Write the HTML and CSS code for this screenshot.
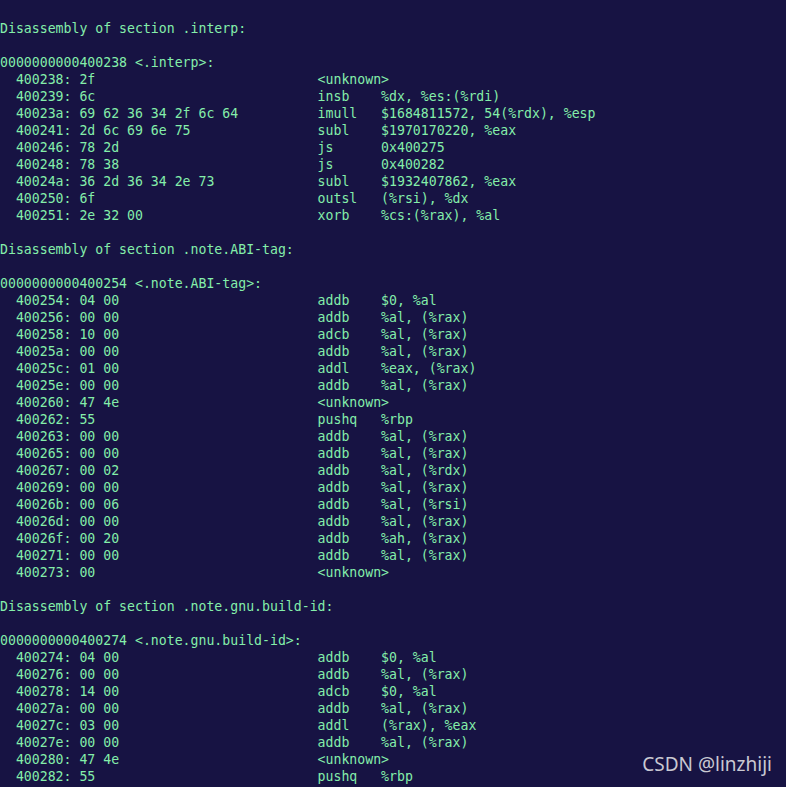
FILE: index.html
```html
<!DOCTYPE html>
<html>
<head>
<meta charset="utf-8">
<link rel="stylesheet" href="styles.css">
</head>
<body>
<pre class="term">

Disassembly of section .interp:

0000000000400238 &lt;.interp&gt;:
  400238: 2f                            &lt;unknown&gt;
  400239: 6c                            insb    %dx, %es:(%rdi)
  40023a: 69 62 36 34 2f 6c 64          imull   $1684811572, 54(%rdx), %esp
  400241: 2d 6c 69 6e 75                subl    $1970170220, %eax
  400246: 78 2d                         js      0x400275
  400248: 78 38                         js      0x400282
  40024a: 36 2d 36 34 2e 73             subl    $1932407862, %eax
  400250: 6f                            outsl   (%rsi), %dx
  400251: 2e 32 00                      xorb    %cs:(%rax), %al

Disassembly of section .note.ABI-tag:

0000000000400254 &lt;.note.ABI-tag&gt;:
  400254: 04 00                         addb    $0, %al
  400256: 00 00                         addb    %al, (%rax)
  400258: 10 00                         adcb    %al, (%rax)
  40025a: 00 00                         addb    %al, (%rax)
  40025c: 01 00                         addl    %eax, (%rax)
  40025e: 00 00                         addb    %al, (%rax)
  400260: 47 4e                         &lt;unknown&gt;
  400262: 55                            pushq   %rbp
  400263: 00 00                         addb    %al, (%rax)
  400265: 00 00                         addb    %al, (%rax)
  400267: 00 02                         addb    %al, (%rdx)
  400269: 00 00                         addb    %al, (%rax)
  40026b: 00 06                         addb    %al, (%rsi)
  40026d: 00 00                         addb    %al, (%rax)
  40026f: 00 20                         addb    %ah, (%rax)
  400271: 00 00                         addb    %al, (%rax)
  400273: 00                            &lt;unknown&gt;

Disassembly of section .note.gnu.build-id:

0000000000400274 &lt;.note.gnu.build-id&gt;:
  400274: 04 00                         addb    $0, %al
  400276: 00 00                         addb    %al, (%rax)
  400278: 14 00                         adcb    $0, %al
  40027a: 00 00                         addb    %al, (%rax)
  40027c: 03 00                         addl    (%rax), %eax
  40027e: 00 00                         addb    %al, (%rax)
  400280: 47 4e                         &lt;unknown&gt;
  400282: 55                            pushq   %rbp
</pre>
<div class="mark">CSDN @linzhiji</div>
</body>
</html>
```
FILE: styles.css
```css
html, body {
  margin: 0;
  padding: 0;
  background: #171343;
  height: 100%;
  overflow: hidden;
}
.term {
  margin: 0;
  padding: 3px 0 0 0;
  font-family: "DejaVu Sans Mono", "Liberation Mono", monospace;
  font-size: 13.2px;
  line-height: 17px;
  color: #84eeaa;
  white-space: pre;
}
.mark {
  position: absolute;
  right: 14px;
  bottom: 10px;
  font-family: "Noto Sans", "DejaVu Sans", sans-serif;
  font-size: 19px;
  color: #c9c9d2;
}
```
